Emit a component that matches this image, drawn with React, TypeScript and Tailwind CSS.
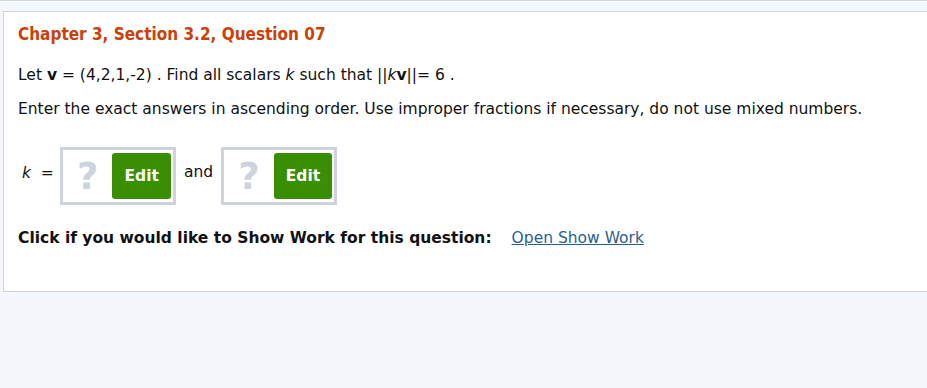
export default function App() {
  return (
    <div className="w-[927px] h-[388px] bg-[#f4f7fb] border-t border-[#d3d9e3] overflow-hidden" style={{ fontFamily: '"DejaVu Sans", Verdana, sans-serif' }}>
      <div className="mt-[10px] ml-[3px] h-[281px] bg-white border border-r-0 border-[#cfd5df] pl-[14px] pt-[11px]">
        <h2 className="text-[17px] font-bold text-[#c9410b] leading-[22px]" style={{ fontFamily: '"DejaVu Sans Condensed", "DejaVu Sans", sans-serif' }}>
          Chapter 3, Section 3.2, Question 07
        </h2>

        <p className="mt-[20px] text-[15.5px] text-[#111] leading-[20px]">
          Let <b>v</b> = (4,2,1,-2) . Find all scalars <i>k</i> such that ||<i>k</i><b>v</b>||= 6 .
        </p>
        <p className="mt-[14px] text-[15.5px] text-[#111] leading-[20px]">
          Enter the exact answers in ascending order. Use improper fractions if necessary, do not use mixed numbers.
        </p>

        <div className="mt-[28px] flex items-start gap-[6px] text-[15.5px] text-[#111]">
          <span className="pl-[4px] pt-[15px] w-[36px] whitespace-nowrap"><i>k</i>&nbsp; =</span>
          <AnswerBox />
          <span className="px-[2px] pt-[14px]">and</span>
          <AnswerBox />
        </div>

        <div className="mt-[22px] flex items-center text-[15.5px]">
          <span className="font-bold text-[#111]">Click if you would like to Show Work for this question:</span>
          <a className="ml-[20px] text-[#2a5f8f] underline" href="#">Open Show Work</a>
        </div>
      </div>
    </div>
  );
}

function AnswerBox() {
  return (
    <div className="w-[116px] h-[58px] border-[3px] border-[#cdd4de] bg-white flex items-center pl-[14px] pr-[2px] gap-[14px]">
      <span className="text-[37px] font-bold text-[#cdd4de] leading-none">?</span>
      <button className="w-[59px] h-[46px] rounded-[3px] bg-[#3a8f00] text-white font-bold text-[15.5px] pt-[2px]">Edit</button>
    </div>
  );
}
